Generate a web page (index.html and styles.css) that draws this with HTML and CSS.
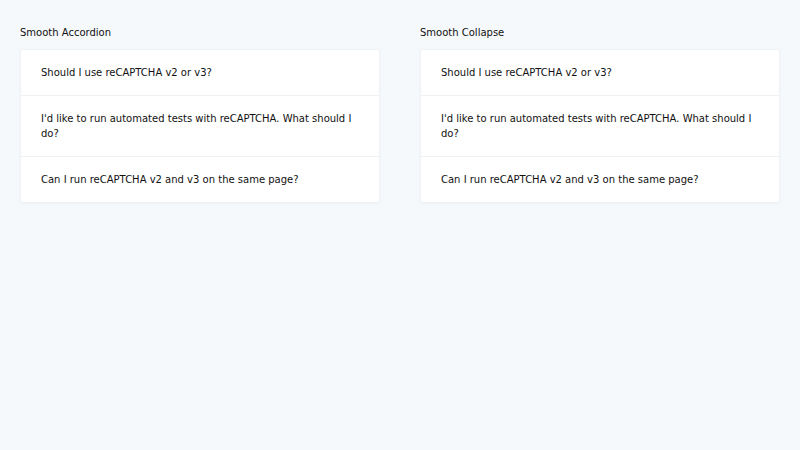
FILE: index.html
```html
<!DOCTYPE html>
<html lang="en">
<head>
    <meta charset="UTF-8">
    <meta name="viewport" content="width=device-width, initial-scale=1.0">
    <title>Smooth Accordion / Collapse</title>
    <link rel="stylesheet" href="styles.css">
</head>
<body>
    <div class="demo-grid">
        <section class="demo">
            <h3 class="demo-title">Smooth Accordion</h3>
            <div class="faq-card">
                <div class="faq-item">Should I use reCAPTCHA v2 or v3?</div>
                <div class="faq-item">I'd like to run automated tests with reCAPTCHA. What should I do?</div>
                <div class="faq-item">Can I run reCAPTCHA v2 and v3 on the same page?</div>
            </div>
        </section>

        <section class="demo">
            <h3 class="demo-title">Smooth Collapse</h3>
            <div class="faq-card">
                <div class="faq-item">Should I use reCAPTCHA v2 or v3?</div>
                <div class="faq-item">I'd like to run automated tests with reCAPTCHA. What should I do?</div>
                <div class="faq-item">Can I run reCAPTCHA v2 and v3 on the same page?</div>
            </div>
        </section>
    </div>
</body>
</html>
```

FILE: styles.css
```css
body {
    font-family: "DejaVu Sans", sans-serif;
    background: #f6f9fc;
    color: #111;
    margin: 0;
    padding: 20px;
}

.demo-grid {
    display: grid;
    grid-template-columns: 1fr 1fr;
    gap: 40px;
}

.demo-title {
    font-size: 10px;
    font-weight: normal;
    margin: 6px 0 10px;
    line-height: 13px;
}

.faq-card {
    background: white;
    border: 1px solid #eef2f6;
    border-radius: 2px;
    box-shadow: 0 1px 3px rgba(0,0,0,0.03);
}

.faq-item {
    font-size: 10px;
    line-height: 15px;
    padding: 15px 20px;
}

.faq-item + .faq-item {
    border-top: 1px solid #f0f3f6;
}
```
